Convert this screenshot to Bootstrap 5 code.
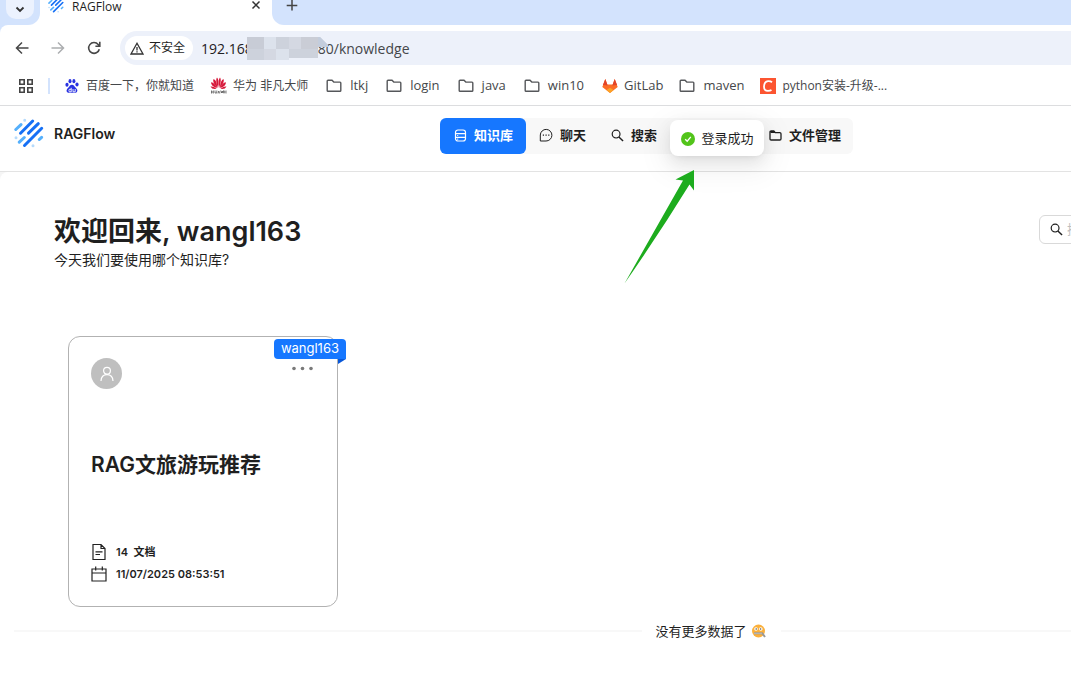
<!DOCTYPE html>
<html lang="zh-CN">
<head>
<meta charset="utf-8">
<meta name="viewport" content="width=device-width, initial-scale=1">
<title>RAGFlow</title>
<link href="https://cdn.jsdelivr.net/npm/bootstrap@5.3.0/dist/css/bootstrap.min.css" rel="stylesheet">
<style>
:root{--chrome-font:"Open Sans","Noto Sans CJK SC",sans-serif;--app-font:Inter,"Noto Sans CJK SC",sans-serif}
body{font-family:var(--app-font);color:#1f1f1f;background:#fff;overflow-x:hidden;font-size:14px}
svg{display:block;flex-shrink:0}
button{border:0;background:none;padding:0;color:inherit}
a{color:inherit;text-decoration:none}
.browser{font-family:var(--chrome-font)}
.tabstrip{height:25px}
.strip-start{width:40px;background:#d3e3fd;border-bottom-right-radius:12px;padding-left:6px}
.strip-end{background:#d3e3fd;border-bottom-left-radius:12px;padding-left:14px}
.tab-search{width:28px;height:19px;background:#ecf2fe;border-radius:0 0 10px 10px;padding:1px 9px}
.tab-item{width:232px;padding:0 11px 0 8px;font-size:12px;line-height:13px}
.tab-logo{margin-top:-3px}
.toolbar-back{background:linear-gradient(90deg,#d3e3fd 20px,#fff 20px)}
.toolbar{background:#fff;border-top-left-radius:8px;height:40px;padding:6px 0 0 15px}
.tool-buttons{gap:22px}
.omnibox{background:#edf1fa;border-radius:17px 0 0 17px;height:34px;padding-left:5px;margin-left:19px}
.site-chip{background:#fff;border-radius:12px;height:24px;padding:0 8px 0 5px;gap:5px;font-size:12px}
.url{font-size:14px;margin-left:8px;color:#45474a}
.url .host{color:#1f2023}
.url svg{margin:0 -10px 0 -6px;position:relative}
.bookmarks{height:41px;border-bottom:1px solid #dcdddf;padding:1px 0 0 18px;font-size:12px;color:#45474a;gap:18px;white-space:nowrap}
.bookmarks a{gap:6px}
.bookmarks .site-link{margin-right:-2px}
.bookmarks .folder{gap:8px}
.bookmarks .latin{font-size:13px}
.bookmark-rule{width:2px;height:16px;background:#d3e3fd;margin:0 -4px}
.app-shell{width:calc(100% + 351px)}
.app-header{height:66px;border-bottom:1px solid #e3e3e3;padding:12px 14px 0}
.brand-zone{width:426px;gap:10px;height:30px}
.brand-zone strong{font-size:14px;font-weight:600}
.main-nav{background:#f8f8f8;border-radius:6px;height:36px}
.main-nav .nav-entry{padding:0 12px 2px 13px;height:36px;gap:7px;font-weight:700;font-size:13px;line-height:34px}
.main-nav .nav-entry.active{background:#1677ff;color:#fff;border-radius:6px;padding:0 13px 2px 14px}
.toast-slot{width:87px}
.login-toast{top:2px;left:1px;width:94px;height:36px;padding-top:2px;border-radius:8px;background:#fff;box-shadow:0 6px 16px rgba(0,0,0,.08),0 3px 6px -4px rgba(0,0,0,.12),0 9px 28px 8px rgba(0,0,0,.05);font-size:13px;gap:7px;z-index:2;white-space:nowrap}
.pointer-arrow{top:50px;left:-45px;z-index:3}
.page-back{background:#f5f5f5}
.page-back main{background:#fff;border-top-left-radius:8px}
.welcome{padding:41px 54px 0}
.welcome h1{font-size:27px;line-height:38px;font-weight:600;margin:0}
.welcome p{font-size:14px;line-height:18px;margin:0}
.search-box{border:1px solid #d9d9d9;border-radius:6px;height:29px;width:220px;padding:0 10px;gap:4px;margin:2px 109px 0 0}
.search-box input{border:0;outline:0;font-size:13px;width:170px;padding:0}
.search-box input::placeholder{color:#bfbfbf;opacity:1}
.kb-card{width:270px;height:271px;border:1px solid #b2b2b2;border-radius:12px;margin:67px 0 0 68px;padding:21px 22px}
.owner-ribbon{top:2px;right:-9px;height:20px;line-height:19px;font-size:13px;padding:0 7px;background:#1677ff;color:#fff;border-radius:4px 4px 0 4px}
.owner-ribbon::after{content:"";position:absolute;right:0;top:20px;border:0 solid transparent;border-right-width:8px;border-top:5px solid #0958d9}
.user-avatar{width:31px;height:31px;background:#bfbfbf}
.kb-card h2{font-size:21px;line-height:28px;font-weight:600;margin:0}
.kb-meta{font-size:11px;line-height:22px;font-weight:600}
.kb-meta>div{gap:9px}
.end-line{padding:0 14px;margin-top:12px;font-size:13px;line-height:24px;gap:14px}
.end-line hr{flex:1;margin:0;border-top:2px solid #f8f8f8;opacity:1}
</style>
</head>
<body>
<svg width="0" height="0" class="position-absolute" aria-hidden="true">
<symbol id="logo" viewBox="0 0 30 30"><g fill="none" stroke-linecap="round" stroke-width="3"><path d="M6.500 15.200 18.700 3M14.500 15.200 24.300 5.700M10.500 27.500 27.700 10.300" stroke="#1670f5"/><path d="M1.800 11.500 7 6.600M5.300 24.200 10.300 19.500M25.300 21.500 27.600 19.300" stroke="#55b0fc"/><path d="M10.700 2.300h.01M2 19.700h.01M19 27.700h.01" stroke="#b5dafc"/></g></symbol>
<symbol id="folder" viewBox="0 0 16 16"><path d="M1.200 3q0-.8.8-.8h4l1.800 1.900H14q.8 0 .8.800v7.600q0 .8-.8.800H2q-.8 0-.8-.8z" fill="none" stroke="#55575a" stroke-width="1.400"/></symbol>
<symbol id="search" viewBox="0 0 14 14"><circle cx="5.500" cy="5.500" r="4.200" fill="none" stroke="currentColor" stroke-width="1.300"/><path d="M8.500 8.500 13 13" stroke="currentColor" stroke-width="1.500"/></symbol>
</svg>

<div class="browser">
  <div class="tabstrip d-flex">
    <div class="strip-start"><button class="tab-search d-block" aria-label="搜索标签页"><svg width="10" height="8" viewBox="0 0 10 8"><path d="M1.500 1.500 5 5l3.500-3.500" fill="none" stroke="#333" stroke-width="1.800"/></svg></button></div>
    <div class="tab-item d-flex align-items-start"><svg class="tab-logo" width="16" height="16"><use href="#logo"/></svg><span class="ms-2">RAGFlow</span><button class="ms-auto" aria-label="关闭"><svg width="10" height="11" viewBox="0 0 10 11"><path d="M1.500 1.500 8.500 8.500M8.500 1.500 1.500 8.500" stroke="#333" stroke-width="1.500"/></svg></button></div>
    <div class="strip-end flex-grow-1"><button class="d-block" aria-label="新标签页"><svg width="12" height="12" viewBox="0 0 12 12"><path d="M6 0v10.500M.7 5.500h10.600" stroke="#444" stroke-width="1.500"/></svg></button></div>
  </div>
  <div class="toolbar-back"><div class="toolbar d-flex">
    <div class="tool-buttons d-flex align-items-center">
      <button aria-label="后退"><svg width="14" height="14" viewBox="0 0 14 14"><path d="M13.500 7H2M7 1.500 1.500 7 7 12.500" fill="none" stroke="#474747" stroke-width="1.500"/></svg></button>
      <button aria-label="前进"><svg width="14" height="14" viewBox="0 0 14 14"><path d="M.5 7H12M7 1.500 12.500 7 7 12.500" fill="none" stroke="#acaeb0" stroke-width="1.500"/></svg></button>
      <button aria-label="刷新"><svg width="14" height="14" viewBox="0 0 14 14"><path d="M12.300 8.200A5.400 5.400 0 1 1 11.200 3.500L12.500 5M12.800.8V5.200H8.400" fill="none" stroke="#474747" stroke-width="1.600"/></svg></button>
    </div>
    <div class="omnibox d-flex align-items-center flex-grow-1">
      <button class="site-chip d-flex align-items-center"><svg width="14" height="13" viewBox="0 0 14 13"><path d="M7 1.300 13 12H1z" fill="none" stroke="#333" stroke-width="1.300"/><path d="M7 5v3.500M7 9.300v1.300" stroke="#333" stroke-width="1.300"/></svg>不安全</button>
      <div class="url d-flex align-items-center"><span class="host">192.168</span><svg width="81" height="23" viewBox="0 0 81 23"><path d="M0 0H73L81 8V10H71V21H42V23H0z" fill="#cdd2dc"/><path d="M0 0h17v12H0z" fill="#c8ccd6"/><path d="M17 0h12v12H17zM29 12h13v11H29z" fill="#dce2ec"/><path d="M42 0h12v12H42zM17 12h12v11H17z" fill="#d4d8e2"/><path d="M54 0h17v12H54z" fill="#cacdd6"/><path d="M71 0h2l8 8v2H71z" fill="#c3cddd"/></svg><span>80/knowledge</span></div>
    </div>
  </div></div>
  <nav class="bookmarks d-flex align-items-center" aria-label="书签">
    <svg width="16" height="16" viewBox="0 0 16 16"><path d="M1.800 1.800h4.400v4.400H1.800zM9.800 1.800h4.400v4.400H9.800zM1.800 9.800h4.400v4.400H1.800zM9.800 9.800h4.400v4.400H9.800z" fill="none" stroke="#444" stroke-width="1.600"/></svg>
    <span class="bookmark-rule"></span>
    <a href="#" class="site-link d-flex align-items-center"><svg width="16" height="16" viewBox="0 0 16 16" fill="#2932e1"><ellipse cx="3" cy="6.800" rx="1.600" ry="2"/><ellipse cx="6" cy="3.200" rx="1.500" ry="2.100"/><ellipse cx="9.900" cy="3.200" rx="1.500" ry="2.100"/><ellipse cx="13" cy="6.600" rx="1.600" ry="2"/><path d="M8 6.800c2 0 2.600 2 4 3.200 2.500 2.500 1.300 4.800-1.300 4.800-1.500 0-3.900-.2-5.400 0-2.800.3-3.800-2.500-1.300-4.800C5.500 8.700 6 6.800 8 6.800"/><path d="M7.200 9.800v4.200M7.200 11.300H5.300q-.7 1.400 0 2.500h1.900M9 11v2.800h2.200V11" fill="none" stroke="#fff" stroke-width=".9"/></svg>百度一下，你就知道</a>
    <a href="#" class="d-flex align-items-center"><svg width="17" height="17" viewBox="0 0 17 17"><g fill="#d7193b"><path d="M8 11Q5 3 7 .5 9.500 3 8 11z"/><path d="M9 11Q7.800 3 10 .5 12 3 9 11z"/><path d="M7.300 11Q2 5 3.500 2 7 3 7.300 11z"/><path d="M9.700 11Q10.500 3 13.500 2 15 5 9.700 11z"/><path d="M6.900 11.200Q1 9 1 5.200 5 5.500 6.900 11.200z"/><path d="M10.100 11.200Q12 5.500 16 5.200 16 9 10.100 11.200z"/><path d="M6.500 11.900Q2 12.800.5 9.500 3.800 9 6.500 11.900z"/><path d="M10.500 11.900Q13.500 9 16.500 9.500 15 12.800 10.500 11.900z"/></g><path d="M1.500 13.500v3M3.300 13.500v3M1.500 15h1.800M5 13.500v2.500h1.800v-2.500M8 16.500l.8-2.500.9 2.500M10.700 13.500l.7 2.500.8-2 .7 2 .7-2.500M14 13.500v3M14 15h1.500M16 13.500v3" fill="none" stroke="#444" stroke-width=".7"/></svg>华为 非凡大师</a>
    <a href="#" class="folder latin d-flex align-items-center"><svg width="16" height="16"><use href="#folder"/></svg>ltkj</a>
    <a href="#" class="folder latin d-flex align-items-center"><svg width="16" height="16"><use href="#folder"/></svg>login</a>
    <a href="#" class="folder latin d-flex align-items-center"><svg width="16" height="16"><use href="#folder"/></svg>java</a>
    <a href="#" class="folder latin d-flex align-items-center"><svg width="16" height="16"><use href="#folder"/></svg>win10</a>
    <a href="#" class="latin site-link d-flex align-items-center"><svg width="16" height="16" viewBox="0 0 16 16"><path d="M8 15 .3 9 3.300 1l2 5.500h5.400L12.700 1l3 8z" fill="#fc6d26"/><path d="M3.300 1 .9 7l4.800.5zM12.700 1l2.400 6-4.800.5z" fill="#e24329"/><path d="M8 15 4.500 12 8 9.700 11.500 12z" fill="#fca326"/></svg>GitLab</a>
    <a href="#" class="folder latin site-link d-flex align-items-center"><svg width="16" height="16"><use href="#folder"/></svg>maven</a>
    <a href="#" class="d-flex align-items-center"><svg width="16" height="16" viewBox="0 0 16 16"><path d="M0 0h16v16H0z" fill="#fc5531"/><path d="M12 4.300Q10.500 3 8 3.200 4.300 3.700 4 8.500 4 13 8 12.900q2 0 3.500-.9" fill="none" stroke="#fff" stroke-width="1.800"/></svg>python安装-升级-...</a>
  </nav>
</div>

<div class="overflow-hidden">
<div class="app-shell">
  <header class="app-header d-flex align-items-start">
    <a href="#" class="brand-zone d-flex align-items-center"><svg width="30" height="30"><use href="#logo"/></svg><strong>RAGFlow</strong></a>
    <nav class="main-nav d-flex">
      <a href="#" class="nav-entry active d-flex align-items-center"><svg width="13" height="13" viewBox="0 0 13 13" fill="none" stroke="currentColor" stroke-width="1.200"><rect x="1.500" y="1" width="10" height="11" rx="2.500"/><path d="M1.500 4.600h10M1.500 8.300h10M3.200 6.500h1M3.200 10.200h1"/></svg>知识库</a>
      <a href="#" class="nav-entry d-flex align-items-center"><svg width="14" height="14" viewBox="0 0 14 14"><path d="M1.300 13V7A5.800 5.800 0 1 1 7 13z" fill="none" stroke="currentColor"/><path d="M3.800 6.500h1.200v1.200H3.800zM6.500 6.500h1.200v1.200H6.500zM9.200 6.500h1.200v1.200H9.200z" fill="currentColor"/></svg>聊天</a>
      <a href="#" class="nav-entry d-flex align-items-center"><svg width="13" height="13"><use href="#search" width="13" height="13"/></svg>搜索</a>
      <div class="toast-slot position-relative">
        <div class="login-toast position-absolute d-flex align-items-center justify-content-center" role="status"><svg width="14" height="14" viewBox="0 0 14 14"><circle cx="7" cy="7" r="7" fill="#52c41a"/><path d="M4.200 7.200 6.200 9.200 9.800 4.800" fill="none" stroke="#fff" stroke-width="1.300"/></svg>登录成功</div>
        <svg class="pointer-arrow position-absolute" width="72" height="116" viewBox="0 0 72 116"><path d="M.5 115.500 59 12.500 51.500 11.500 70 2V22.500L65.500 16.500Q35 66 .5 115.500z" fill="#1dac1e"/></svg>
      </div>
      <a href="#" class="nav-entry d-flex align-items-center"><svg width="13" height="13" viewBox="0 0 13 13"><path d="M1 3.200Q1 2 2.200 2h2.600l1.500 1.600h4.500Q12 3.600 12 4.800v5Q12 11 10.800 11H2.200Q1 11 1 9.800z" fill="none" stroke="currentColor" stroke-width="1.300"/><path d="M1.500 2h3.500l1.500 2h-5z" fill="currentColor"/></svg>文件管理</a>
    </nav>
  </header>

  <div class="page-back"><main>
    <section class="welcome d-flex justify-content-between align-items-start">
      <div><h1>欢迎回来, wangl163</h1><p>今天我们要使用哪个知识库?</p></div>
      <label class="search-box d-flex align-items-center"><svg width="13" height="13"><use href="#search" width="13" height="13"/></svg><input type="text" placeholder="搜索" aria-label="搜索"></label>
    </section>

    <article class="kb-card position-relative d-flex flex-column">
      <span class="owner-ribbon position-absolute">wangl163</span>
      <div class="d-flex justify-content-between align-items-start">
        <span class="user-avatar rounded-circle d-flex align-items-center justify-content-center"><svg width="16" height="16" viewBox="0 0 16 16" fill="none" stroke="#fff" stroke-width="1.200"><circle cx="8" cy="4.800" r="3.400"/><path d="M2 15Q2.300 8.700 8 8.700T14 15"/></svg></span>
        <button aria-label="更多"><svg class="mt-2" width="24" height="6" viewBox="0 0 24 6" fill="#7a7a7a"><circle cx="3" cy="2.500" r="1.800"/><circle cx="11.500" cy="2.500" r="1.800"/><circle cx="20" cy="2.500" r="1.800"/></svg></button>
      </div>
      <h2 class="my-auto">RAG文旅游玩推荐</h2>
      <div class="kb-meta">
        <div class="d-flex align-items-center"><svg width="16" height="18" viewBox="0 0 16 18" fill="none" stroke="#222" stroke-width="1.200"><path d="M2 1.500h8L14 5.500V16.500H2zM10 1.500v4h4M4.500 8.800h7M4.500 11.500h4.500"/></svg><span>14&nbsp; 文档</span></div>
        <div class="d-flex align-items-center"><svg width="16" height="16" viewBox="0 0 16 16" fill="none" stroke="#222" stroke-width="1.200"><path d="M1 3h14v12H1zM1 7h14M4.700.5v4M11.300.5v4"/></svg><span>11/07/2025 08:53:51</span></div>
      </div>
    </article>

    <div class="end-line d-flex align-items-center"><hr><span class="d-flex align-items-center gap-1">没有更多数据了<svg width="16" height="14" viewBox="0 0 16 14"><circle cx="7.500" cy="7" r="6.500" fill="#fbb03b"/><circle cx="5" cy="5" r="1.800" fill="#fff"/><circle cx="9.800" cy="5" r="1.800" fill="#fff"/><circle cx="5.200" cy="5" r=".8" fill="#555"/><circle cx="9.600" cy="5" r=".8" fill="#555"/><path d="M3 9.300h9" stroke="#999" stroke-width="2"/><path d="M3.500 9.300h8" stroke="#ddd" stroke-dasharray="1"/><path d="m11.500 9.500 2.500 3.500" stroke="#999" stroke-width="2"/></svg></span><hr></div>
  </main></div>
</div>
</div>
<script src="https://cdn.jsdelivr.net/npm/bootstrap@5.3.0/dist/js/bootstrap.bundle.min.js"></script>
</body>
</html>
